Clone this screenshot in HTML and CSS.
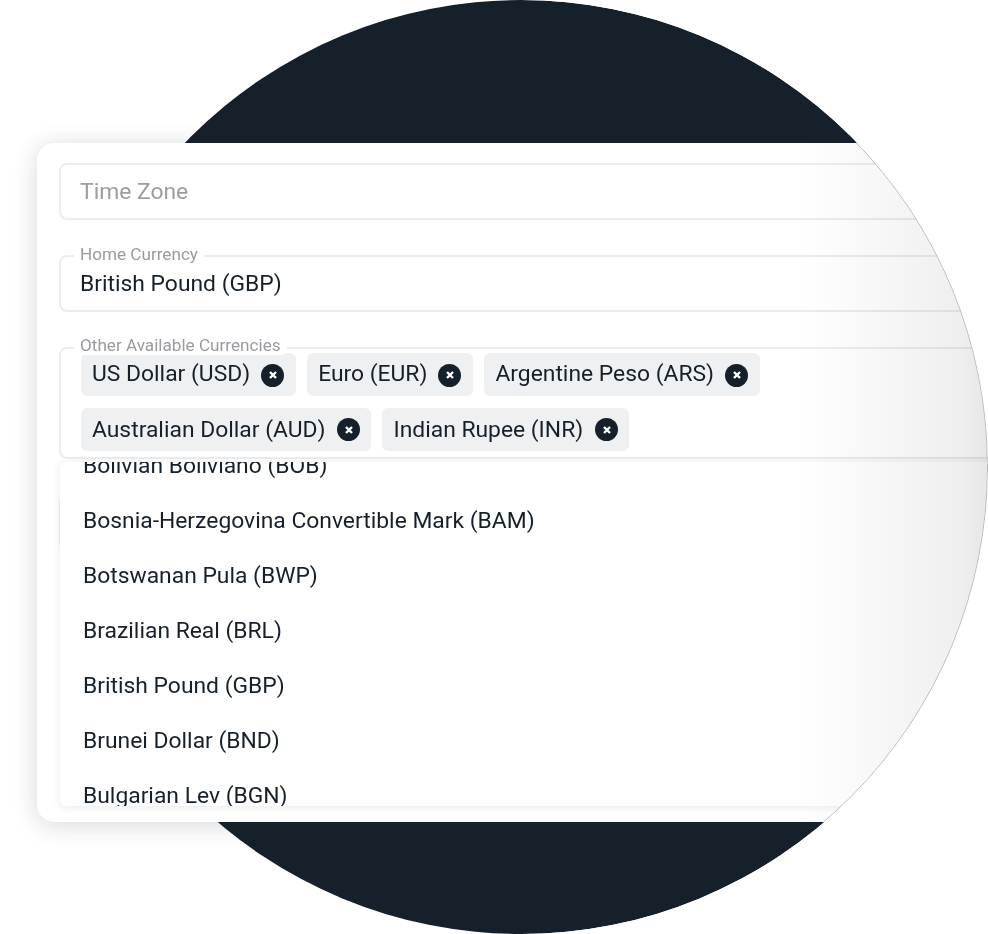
FILE: index.html
```html
<html>
<head>
<link rel="stylesheet" href="styles.css">
</head>
<body>
<div class="stage">
    <div class="disc"></div>
    <div class="card">
        <div class="field field-empty">Time Zone</div>
        <div class="field">
            <span class="field-label">Home Currency</span>
            British Pound (GBP)
        </div>
        <div class="field field-chips">
            <span class="field-label">Other Available Currencies</span>
            <div class="chip chip-top">US Dollar (USD) <span class="chip-x"><svg viewBox="0 0 10 10"><path d="M2 2l6 6M8 2l-6 6"/></svg></span></div>
            <div class="chip chip-top">Euro (EUR) <span class="chip-x"><svg viewBox="0 0 10 10"><path d="M2 2l6 6M8 2l-6 6"/></svg></span></div>
            <div class="chip chip-top">Argentine Peso (ARS) <span class="chip-x"><svg viewBox="0 0 10 10"><path d="M2 2l6 6M8 2l-6 6"/></svg></span></div>
            <div class="chip">Australian Dollar (AUD) <span class="chip-x"><svg viewBox="0 0 10 10"><path d="M2 2l6 6M8 2l-6 6"/></svg></span></div>
            <div class="chip">Indian Rupee (INR) <span class="chip-x"><svg viewBox="0 0 10 10"><path d="M2 2l6 6M8 2l-6 6"/></svg></span></div>
        </div>
        <div class="field field-behind"></div>
        <div class="dropdown">
            <div class="dropdown-list">
                <div class="option">Bolivian Boliviano (BOB)</div>
                <div class="option">Bosnia-Herzegovina Convertible Mark (BAM)</div>
                <div class="option">Botswanan Pula (BWP)</div>
                <div class="option">Brazilian Real (BRL)</div>
                <div class="option">British Pound (GBP)</div>
                <div class="option">Brunei Dollar (BND)</div>
                <div class="option">Bulgarian Lev (BGN)</div>
            </div>
        </div>
        <div class="fade"></div>
    </div>
    <div class="rim"></div>
</div>
</body>
</html>
```
FILE: styles.css
```css
html, body {
    margin: 0;
    height: 100%;
    background: #fff;
    overflow: hidden;
}

body {
    font-family: Roboto, "Liberation Sans", sans-serif;
    color: #16202b;
}

/* left half stays open for the card shadow, right half is cut by the disc */
.stage {
    position: relative;
    width: 988px;
    height: 934px;
    box-sizing: border-box;
    padding: 143px 0 0 37px;
    clip-path: path("M0 0H521A467 467 0 0 1 521 934H0Z");
}

/* the shadow sits under the disc, the card over it */
.stage::before {
    content: "";
    position: absolute;
    left: 37px;
    top: 143px;
    width: 1000px;
    height: 679px;
    border-radius: 18px;
    box-shadow: 0 3px 24px rgba(22, 32, 43, .18);
}

.disc {
    position: absolute;
    left: 54px;
    top: 0;
    width: 934px;
    height: 934px;
    border-radius: 50%;
    background: #16202b;
}

.rim {
    position: absolute;
    left: 521px;
    top: 143px;
    width: 467px;
    height: 679px;
    overflow: hidden;
}

.rim::after {
    content: "";
    position: absolute;
    left: -467px;
    top: -143px;
    width: 934px;
    height: 934px;
    box-sizing: border-box;
    border-radius: 50%;
    border: 1px solid #bcbdbe;
}

.card {
    position: relative;
    box-sizing: border-box;
    width: 1000px;
    height: 679px;
    padding: 20px 0 0 22px;
    background: #fff;
    border-radius: 18px 0 0 18px;
}

.fade {
    position: absolute;
    left: 0;
    top: 0;
    right: 0;
    bottom: 0;
    border-radius: inherit;
    mix-blend-mode: multiply;
    background: linear-gradient(90deg, #fff 76.3%, #f7f7f7 84.3%, #efeff0 92.3%, #e6e6e7 95.1%);
}

.field {
    position: relative;
    box-sizing: border-box;
    height: 57px;
    margin-bottom: 35px;
    padding: 14px 19px 0;
    border: 2px solid #ecedee;
    border-radius: 8px;
    font-size: 22.85px;
    line-height: 26px;
}

.field-empty {
    color: #9a9da1;
}

.field-label {
    position: absolute;
    left: 13px;
    top: -13px;
    padding: 0 6px;
    background: #fff;
    color: #989b9f;
    font-size: 17.14px;
    line-height: 20px;
}

.field-chips {
    display: flex;
    flex-wrap: wrap;
    align-content: flex-start;
    gap: 12px 11px;
    height: 112px;
    margin-bottom: 37px;
    padding: 4px 240px 0 20px;
}

.field-chips .field-label {
    z-index: 1;
    top: -14px;
    border-radius: 0 0 6px 0;
}

.chip {
    display: flex;
    align-items: center;
    box-sizing: border-box;
    gap: 11px;
    height: 43px;
    padding: 0 11px;
    border-radius: 6px;
    background: #eff0f2;
    white-space: nowrap;
}

.chip-top {
    padding-bottom: 2px;
}

.chip-x {
    display: flex;
    align-items: center;
    justify-content: center;
    width: 23px;
    height: 23px;
    margin-left: 1px;
    border-radius: 50%;
    background: #16202b;
}

.chip-top .chip-x {
    margin-top: 3px;
    margin-left: 0;
    margin-right: 1px;
}

.chip-x svg {
    width: 10px;
    height: 10px;
    fill: none;
    stroke: #fff;
    stroke-width: 2.4;
}

.field-behind {
    height: 54px;
    border-radius: 8px 0 0 8px;
}

.dropdown {
    position: absolute;
    left: 23px;
    top: 319px;
    width: 960px;
    height: 344px;
    overflow: hidden;
    background: #fff;
    border-radius: 6px 0 0 6px;
    box-shadow: 0 1px 8px rgba(22, 32, 43, .1);
}

.dropdown-list {
    margin-top: -24px;
}

.option {
    height: 55px;
    padding-left: 23px;
    font-size: 22.85px;
    line-height: 55px;
    white-space: nowrap;
}
```
